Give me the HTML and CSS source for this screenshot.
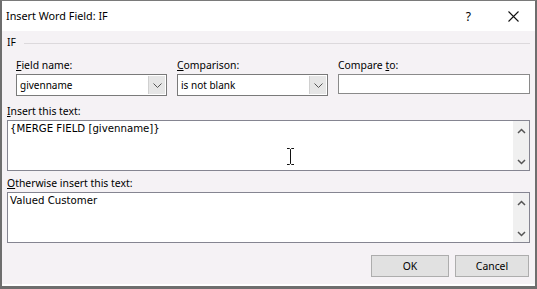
FILE: index.html
```html
<!DOCTYPE html>
<html lang="en">
<head>
    <meta charset="UTF-8">
    <title>Insert Word Field: IF</title>
    <link rel="stylesheet" href="styles.css">
</head>
<body>
    <div class="window">
        <div class="titlebar">
            <span class="title">Insert Word Field: IF</span>
            <span class="help">?</span>
            <svg class="close" width="11" height="11" viewBox="0 0 11 11">
                <path d="M0.5 0.5 L10.5 10.5 M10.5 0.5 L0.5 10.5" stroke="#111" stroke-width="1.1" fill="none"/>
            </svg>
        </div>

        <div class="content">
            <div class="group-head">
                <span>IF</span>
                <div class="group-line"></div>
            </div>

            <div class="fields">
                <div class="field field-name">
                    <label><u>F</u>ield name:</label>
                    <div class="combo">
                        <span class="combo-value">givenname</span>
                        <span class="combo-btn">
                            <svg width="9" height="5" viewBox="0 0 9 5"><path d="M0.5 0.5 L4.5 4.5 L8.5 0.5" stroke="#555" fill="none"/></svg>
                        </span>
                    </div>
                </div>
                <div class="field field-comp">
                    <label><u>C</u>omparison:</label>
                    <div class="combo">
                        <span class="combo-value">is not blank</span>
                        <span class="combo-btn">
                            <svg width="9" height="5" viewBox="0 0 9 5"><path d="M0.5 0.5 L4.5 4.5 L8.5 0.5" stroke="#555" fill="none"/></svg>
                        </span>
                    </div>
                </div>
                <div class="field field-to">
                    <label>Compare <u>t</u>o:</label>
                    <div class="textbox"></div>
                </div>
            </div>

            <label class="area-label"><u>I</u>nsert this text:</label>
            <div class="textarea">
                <div class="area-text">{MERGE FIELD [givenname]}</div>
                <div class="scrollbar">
                    <svg width="9" height="6" viewBox="0 0 9 6"><path d="M1 5 L4.5 1.5 L8 5" stroke="#555" stroke-width="1.5" fill="none"/></svg>
                    <svg width="9" height="6" viewBox="0 0 9 6"><path d="M1 1 L4.5 4.5 L8 1" stroke="#555" stroke-width="1.5" fill="none"/></svg>
                </div>
            </div>

            <label class="area-label otherwise"><u>O</u>therwise insert this text:</label>
            <div class="textarea">
                <div class="area-text">Valued Customer</div>
                <div class="scrollbar">
                    <svg width="9" height="6" viewBox="0 0 9 6"><path d="M1 5 L4.5 1.5 L8 5" stroke="#555" stroke-width="1.5" fill="none"/></svg>
                    <svg width="9" height="6" viewBox="0 0 9 6"><path d="M1 1 L4.5 4.5 L8 1" stroke="#555" stroke-width="1.5" fill="none"/></svg>
                </div>
            </div>

            <div class="buttons">
                <button class="btn btn-ok">OK</button>
                <button class="btn btn-cancel">Cancel</button>
            </div>
        </div>

        <!-- mouse cursor over the first text box -->
        <svg class="ibeam" width="7" height="17" viewBox="0 0 7 17">
            <path d="M0 0.5 H2.5 L3.5 1.5 L4.5 0.5 H7 M3.5 1.5 V15.5 M0 16.5 H2.5 L3.5 15.5 L4.5 16.5 H7" stroke="#111" fill="none"/>
        </svg>
    </div>
</body>
</html>
```

FILE: styles.css
```css
body {
    margin: 0;
    font-family: "Noto Sans", "Open Sans", sans-serif;
    font-size: 10.4px;
    color: #000;
    background: #fff;
}

.window {
    position: relative;
    box-sizing: border-box;
    width: 537px;
    height: 289px;
    border: 1px solid #7a7a7a;
    border-left: 2px solid #6e6e6e;
    border-right: 2px solid #6e6e6e;
    border-bottom: 3px solid #6e6e6e;
    background: #fff;
    display: flex;
    flex-direction: column;
}

.titlebar {
    height: 30px;
    display: flex;
    align-items: center;
    padding-left: 4px;
    background: #fff;
}

.title {
    flex: 1;
    font-size: 10.8px;
    padding-bottom: 1px;
}

.help {
    font-size: 12px;
    margin-right: 37px;
}

.close {
    margin-right: 16px;
}

.content {
    flex: 1;
    background: #f5f2f5;
    padding: 4px 5px 7px 5px;
    margin-bottom: 2px;
    display: flex;
    flex-direction: column;
}

.group-head {
    display: flex;
    align-items: center;
    height: 14px;
    line-height: 14px;
}

.group-line {
    flex: 1;
    height: 1px;
    background: #dcd9dc;
    margin-left: 8px;
    margin-top: 2px;
}

.fields {
    display: flex;
    gap: 10px;
    margin-top: 9px;
    margin-left: 9px;
}

.field label {
    display: block;
    height: 14px;
    line-height: 14px;
    margin-bottom: 2px;
}

.field-name,
.field-comp {
    width: 151px;
}

.field-to {
    flex: 1;
}

.combo {
    box-sizing: border-box;
    height: 22px;
    border: 1px solid #7a7a7a;
    background: #fff;
    display: flex;
    align-items: center;
}

.combo-value {
    flex: 1;
    padding-left: 3px;
    padding-bottom: 1px;
    font-size: 10px;
}

.combo-btn {
    box-sizing: border-box;
    width: 17px;
    height: 18px;
    margin-right: 1px;
    background: #e6e6e6;
    border-left: 1px solid #d0d0d0;
    display: flex;
    align-items: center;
    justify-content: center;
}

.textbox {
    box-sizing: border-box;
    height: 20px;
    margin-top: 1px;
    border: 1px solid #8a8a8a;
    background: #fff;
}

.area-label {
    display: block;
    height: 14px;
    line-height: 14px;
    margin-top: 8px;
    margin-bottom: 2px;
}

.area-label.otherwise {
    margin-top: 5px;
}

.textarea {
    box-sizing: border-box;
    height: 51px;
    border: 1px solid #858591;
    background: #fff;
    display: flex;
}

.area-text {
    flex: 1;
    padding: 1px 2px;
    line-height: 14px;
    font-family: "DejaVu Sans", sans-serif;
    font-size: 10.2px;
}

.scrollbar {
    width: 16px;
    background: #f0f0f0;
    display: flex;
    flex-direction: column;
    justify-content: space-between;
    align-items: center;
    padding: 7px 0 5px;
}

.buttons {
    display: flex;
    justify-content: flex-end;
    gap: 6px;
    margin-top: 12px;
    margin-right: 1px;
}

.btn {
    box-sizing: border-box;
    height: 22px;
    font-family: inherit;
    font-size: 10.4px;
    color: #000;
    background: #e1e1e1;
    border: 1px solid #adadad;
    padding: 0;
}

.btn-ok {
    width: 78px;
}

.btn-cancel {
    width: 74px;
}

.ibeam {
    position: absolute;
    left: 285px;
    top: 147px;
}
```
